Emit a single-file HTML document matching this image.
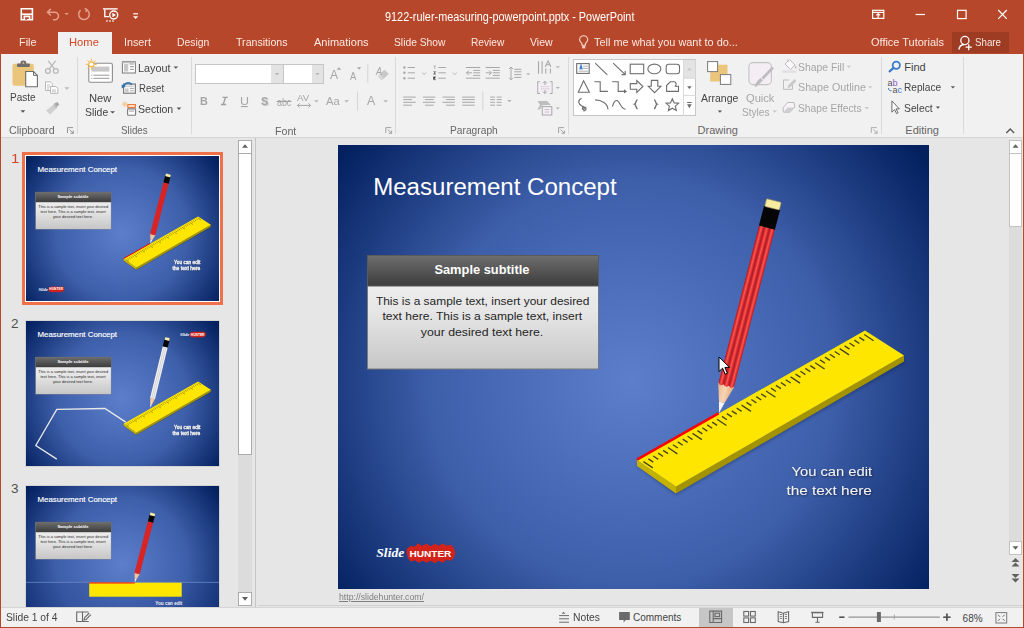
<!DOCTYPE html>
<html><head><meta charset="utf-8">
<style>
*{margin:0;padding:0;box-sizing:border-box}
html,body{width:1024px;height:628px;overflow:hidden;background:#E6E6E6;font-family:"Liberation Sans",sans-serif}
.a{position:absolute;white-space:nowrap}
svg{position:absolute;overflow:hidden}
#title{position:absolute;left:0;top:0;width:1024px;height:54px;background:#B7472A}
#ribbon{position:absolute;left:1px;top:54px;width:1022px;height:83px;background:#F1F1F1}
#rbline{position:absolute;left:1px;top:137px;width:1022px;height:1px;background:#D5D5D5}
#thumbs{position:absolute;left:1px;top:138px;width:254px;height:469px;background:#E6E6E6;overflow:hidden}
#editor{position:absolute;left:256px;top:138px;width:767px;height:467px;background:#E6E6E6;overflow:hidden}
#status{position:absolute;left:1px;top:607px;width:1022px;height:20px;background:#F1F1F1;border-top:1px solid #D5D5D5}
#bl{position:absolute;left:0;top:54px;width:1px;height:574px;background:#B7472A}
#br{position:absolute;left:1023px;top:54px;width:1px;height:574px;background:#B7472A}
#bb{position:absolute;left:0;top:627px;width:1024px;height:1px;background:#B7472A}
.sep{position:absolute;top:57px;width:1px;height:77px;background:#DADADA}
</style></head><body>
<div id="title"></div>
<div id="ribbon"></div>
<div id="rbline"></div>
<div id="thumbs"></div>
<div id="editor"></div>
<div id="status"></div>
<div id="bl"></div><div id="br"></div><div id="bb"></div>

<!-- tabs -->
<div class="a" style="left:58px;top:32px;width:54px;height:22px;background:#F1F1F1"></div>
<div class="a" style="left:952px;top:32px;width:57px;height:21px;background:#9E3B23"></div>

<div class="sep" style="left:77px"></div>
<div class="sep" style="left:191px"></div>
<div class="sep" style="left:395px"></div>
<div class="sep" style="left:568px"></div>
<div class="sep" style="left:881px"></div>
<div class="sep" style="left:963px"></div>


<!-- ===== TITLE BAR ICONS ===== -->
<svg width="1024" height="54" style="left:0;top:0">
  <g fill="none" stroke="#FFFFFF" stroke-width="1.6">
    <path d="M21.3,8.8 H32.4 V19.8 H21.3 Z"/>
    <path d="M21.3,14.2 H32.4"/>
    <path d="M24.3,19.8 V16.4 H29.6 V19.8"/>
  </g>
  <rect x="25.3" y="17.9" width="1.6" height="1.9" fill="#B7472A"/>
  <g fill="none" stroke="#E4A08C" stroke-width="1.5">
    <path d="M47.5,12.2 H54.5 A4,3.8 0 0 1 54.5,19.8 H53"/>
    <path d="M50.8,8.9 L47.5,12.2 L50.8,15.5"/>
    <path d="M80.6,10.2 A5.3,5.3 0 1 0 86.5,9.6"/>
    <path d="M84.6,8.4 L86.9,9.5 L85.7,12"/>
  </g>
  <polygon points="64.4,12.9 68.8,12.9 66.6,15.1" fill="#E4A08C"/>
  <g fill="none" stroke="#FFFFFF" stroke-width="1.4">
    <path d="M103,8.9 H117.6"/>
    <path d="M104.8,9.5 V16.6 H109"/>
    <circle cx="113.7" cy="15" r="4"/>
    <path d="M106,21 H115" stroke-dasharray="2,1" stroke-width="1"/>
  </g>
  <polygon points="112.4,12.7 112.4,17.3 116,15" fill="#FFFFFF"/>
  <rect x="133.2" y="13.2" width="4.8" height="1.2" fill="#FFFFFF"/>
  <polygon points="133,16.2 138.2,16.2 135.6,19" fill="#FFFFFF"/>
  <!-- window controls -->
  <g fill="none" stroke="#FFFFFF" stroke-width="1.2">
    <rect x="872.6" y="10.3" width="11.2" height="8.1"/>
    <path d="M872.6,12.4 H883.8"/>
    <path d="M878.2,18.4 V13.6 M876.4,15.4 L878.2,13.6 L880,15.4"/>
    <path d="M915.6,14.5 H925"/>
    <rect x="957.5" y="10.3" width="8.6" height="8.3"/>
    <path d="M998.2,10 L1006.8,18.8 M1006.8,10 L998.2,18.8"/>
  </g>
  <!-- lightbulb -->
  <g fill="none" stroke="#F6D9CF" stroke-width="1.1">
    <path d="M581.9,45.2 V43.8 C581.9,42.6 579.6,41.9 579.6,39.8 A4.05,4.05 0 1 1 587.7,39.8 C587.7,41.9 585.4,42.6 585.4,43.8 V45.2 Z"/>
  </g>
  <rect x="582.1" y="45.6" width="3.2" height="2.8" fill="#F0C7B9"/>
  <!-- share person -->
  <g fill="none" stroke="#FFFFFF" stroke-width="1.3">
    <circle cx="964.9" cy="40.5" r="4.1"/>
    <path d="M958.9,49.6 C959.3,46.5 961.4,44.7 964,44.5"/>
    <path d="M965.6,47.2 H971.8 M968.7,44.2 V50.2"/>
  </g>
</svg>


<!-- ===== RIBBON: CLIPBOARD + SLIDES ===== -->
<svg width="200" height="83" viewBox="0 54 200 83" style="left:0;top:54px">
  <!-- paste -->
  <rect x="12.5" y="63.8" width="21.3" height="22" rx="2" fill="#EBC57A"/>
  <rect x="17" y="63.5" width="12.8" height="3.4" rx="0.8" fill="#6D6D6D"/>
  <path d="M20.6,64 V62.6 A2.8,2 0 0 1 26.2,62.6 V64 Z" fill="#6D6D6D"/>
  <circle cx="23.4" cy="62.9" r="0.9" fill="#EBC57A"/>
  <path d="M25.7,71.5 H33.5 L37.4,75.4 V86.8 H25.7 Z" fill="#FFFFFF" stroke="#6D6D6D" stroke-width="1.1"/>
  <path d="M33.5,71.5 V75.4 H37.4" fill="none" stroke="#6D6D6D" stroke-width="1"/>
  <polygon points="20.5,110.3 25.3,110.3 22.9,112.7" fill="#555"/>
  <!-- cut -->
  <g fill="none" stroke="#B8B8B8" stroke-width="1.3">
    <circle cx="47.9" cy="71" r="2.4"/><circle cx="55.8" cy="71" r="2.4"/>
    <path d="M49.2,68.9 L55.6,60.8 M54.5,68.9 L48.1,60.8"/>
  </g>
  <!-- copy -->
  <g fill="#FFFFFF" stroke="#B8B8B8" stroke-width="1">
    <path d="M45.5,81.9 H50.5 L52.3,83.7 V90.5 H45.5 Z"/>
    <path d="M50.5,86.5 H55.8 L57.8,88.5 V93.4 H50.5 Z"/>
  </g>
  <g stroke="#B8B8B8" stroke-width="0.9">
    <path d="M47,85 H50 M47,87 H50 M47,89 H49"/>
    <path d="M52,90 H56 M52,91.8 H56"/>
  </g>
  <polygon points="64.5,87.3 69.2,87.3 66.85,89.7" fill="#B8B8B8"/>
  <!-- format painter -->
  <path d="M54,103.5 L57.5,102 L59.3,104.5 L56.5,107.3 Z" fill="#A8A8A8"/>
  <path d="M46,110.5 L52.8,105.2 L56,108.8 L50.3,114.5 Z" fill="#D0D0D0"/>
  <path d="M52.8,105.2 L54.6,103.8 L57.5,107.2 L56,108.8 Z" fill="#BDBDBD"/>
  <!-- dialog launcher clipboard -->
  <g fill="none" stroke="#8A8A8A" stroke-width="0.9">
    <path d="M67.5,133 V127.6 H73" /><path d="M69.5,129.6 L73.3,133.3 M73.3,130.5 V133.3 H70.5"/>
  </g>
  <!-- new slide -->
  <rect x="88.8" y="63.3" width="23.6" height="19" rx="1.6" fill="#FFFFFF" stroke="#8C8C8C" stroke-width="1.1"/>
  <rect x="91.6" y="66.6" width="17.8" height="5" fill="#C8C8C8"/>
  <g stroke="#8C8C8C" stroke-width="0.9"><path d="M93.5,75.2 H109.4 M93.5,78.3 H109.4"/></g>
  <g stroke="#8C8C8C" stroke-width="1"><path d="M91.3,75.2 H92.3 M91.3,78.3 H92.3"/></g>
  <g stroke="#F2B94B" stroke-width="1">
    <path d="M91.4,58.8 V69.8 M85.9,64.3 H96.9 M87.5,60.4 L95.3,68.2 M95.3,60.4 L87.5,68.2"/>
  </g>
  <circle cx="91.4" cy="64.3" r="3" fill="#F2B94B"/><circle cx="91.4" cy="64.3" r="1.9" fill="#FFFFFF"/>
  <polygon points="110.2,111.2 115,111.2 112.6,113.6" fill="#555"/>
  <!-- layout -->
  <rect x="122.4" y="61.7" width="13" height="11.3" fill="#FFFFFF" stroke="#7A7A7A" stroke-width="1"/>
  <rect x="124" y="64" width="4.3" height="7.5" fill="#C8C8C8"/>
  <path d="M129.5,64 H133.8 M130,66.7 H133.8 M130,69.3 H133.8" stroke="#8C8C8C" stroke-width="1"/>
  <rect x="122.4" y="61.7" width="13" height="1.6" fill="#BEBEBE"/>
  <polygon points="173.5,66.4 178.2,66.4 175.85,68.8" fill="#555"/>
  <!-- reset -->
  <rect x="123.6" y="84" width="11.8" height="9.2" fill="#FFFFFF" stroke="#7A7A7A" stroke-width="1.2"/>
  <rect x="125" y="85.3" width="9" height="2" fill="#D8D8D8"/>
  <rect x="125.2" y="88.4" width="3.4" height="3.6" fill="#C8C8C8"/>
  <path d="M129.8,88.5 H134 M129.8,90.8 H134" stroke="#A0A0A0" stroke-width="0.9"/>
  <path d="M123.6,87 C124.3,83 129,81 131.8,84.8" fill="none" stroke="#2E75B6" stroke-width="1.7"/>
  <polygon points="121.8,88.6 121.6,84.4 125.6,86.6" fill="#2E75B6"/>
  <!-- section -->
  <rect x="127.8" y="104.6" width="7.6" height="2.8" fill="#FFF4EC" stroke="#EE7D3A" stroke-width="1.2"/>
  <rect x="127.6" y="108.9" width="8" height="6.3" rx="0.8" fill="#FFFFFF" stroke="#7A7A7A" stroke-width="1.1"/>
  <rect x="129" y="110.2" width="5.2" height="1.8" fill="#C8C8C8"/>
  <g stroke="#F5C48A" stroke-width="0.9"><path d="M124.7,101.2 V107 M121.8,104.1 H127.6 M122.7,102.1 L126.7,106.1 M126.7,102.1 L122.7,106.1"/></g>
  <polygon points="176.6,107.6 181.3,107.6 178.95,110" fill="#555"/>
</svg>


<!-- ===== RIBBON: FONT + PARAGRAPH ===== -->
<svg width="380" height="83" viewBox="190 54 380 83" style="left:190px;top:54px">
  <!-- font boxes -->
  <rect x="195.5" y="64.5" width="88" height="19" fill="#FFFFFF" stroke="#C6C6C6" stroke-width="1"/>
  <rect x="271" y="65" width="12" height="18" fill="#E3E3E3"/>
  <rect x="283.5" y="64.5" width="40" height="19" fill="#FFFFFF" stroke="#C6C6C6" stroke-width="1"/>
  <rect x="312" y="65" width="11" height="18" fill="#E3E3E3"/>
  <polygon points="274.8,73 279.2,73 277,75.2" fill="#B5B5B5"/>
  <polygon points="315.3,73 319.7,73 317.5,75.2" fill="#B5B5B5"/>
  <polygon points="336.7,69.7 341.2,69.7 338.95,67.2" fill="#A6A6A6"/>
  <polygon points="357,67.2 361.2,67.2 359.1,69.7" fill="#A6A6A6"/>
  <rect x="367.3" y="64.2" width="1" height="18.7" fill="#D5D5D5"/>
  <path d="M378.5,75.5 L384.5,69.8 L388.8,73.9 L382.8,79.6 Z" fill="#C8C8C8"/>
  <path d="M377.6,76.4 L380,74 L384,78.3 L381.6,80.6 Z" fill="#D8D8D8"/>
  <!-- italic I -->
  <path d="M222.6,97.3 H227.8 M220.9,104.5 H226.1 M225.5,97.3 L223.2,104.5" fill="none" stroke="#A0A0A0" stroke-width="1.3"/>
  <rect x="240.9" y="106" width="6.9" height="1.1" fill="#A6A6A6"/>
  <rect x="276.5" y="101" width="15" height="1" fill="#A0A0A0"/>
  <!-- AV arrow -->
  <path d="M297.5,105.4 H310.5 M299.5,103.4 L297.5,105.4 L299.5,107.4 M308.5,103.4 L310.5,105.4 L308.5,107.4" fill="none" stroke="#A6A6A6" stroke-width="1"/>
  <polygon points="314.1,100.3 318.7,100.3 316.4,102.6" fill="#B5B5B5"/>
  <polygon points="344.2,100.3 349,100.3 346.6,102.6" fill="#B5B5B5"/>
  <rect x="357" y="91.6" width="1" height="19" fill="#D5D5D5"/>
  <polygon points="383.3,100.3 388,100.3 385.65,102.6" fill="#B5B5B5"/>
  <g fill="none" stroke="#9A9A9A" stroke-width="0.9">
    <path d="M385.8,133 V127.6 H391.3"/><path d="M387.8,129.6 L391.6,133.3 M391.6,130.5 V133.3 H388.8"/>
  </g>
  <!-- paragraph row 1 -->
  <g fill="#A8A8A8">
    <circle cx="404.4" cy="67.5" r="1.2"/><circle cx="404.4" cy="72.8" r="1.2"/><circle cx="404.4" cy="78.2" r="1.2"/>
  </g>
  <g stroke="#A8A8A8" stroke-width="1">
    <path d="M407.7,67.5 H415 M407.7,72.8 H415 M407.7,78.2 H415"/>
    <path d="M438.3,67.5 H445.8 M438.3,72.8 H445.8 M438.3,78.2 H445.8"/>
    <path d="M433.6,66 H436 M434.8,66 V69 M433.4,71.5 H436 L433.4,74.3 H436 M433.4,76.7 H436 L434.6,78.2 L436,79.8 H433.4" stroke-width="0.8"/>
    <path d="M465.9,67.5 H480.2 M473.2,70.4 H480.2 M473.2,72.8 H480.2 M473.2,75.4 H480.2 M465.9,78.2 H480.2"/>
    <path d="M485.5,67.5 H499.8 M492.8,70.4 H499.8 M492.8,72.8 H499.8 M492.8,75.4 H499.8 M485.5,78.2 H499.8"/>
    <path d="M466.5,72.8 H472 M468.8,70.5 L466.5,72.8 L468.8,75.1" fill="none"/>
    <path d="M485.8,72.8 H491.3 M489,70.5 L491.3,72.8 L489,75.1" fill="none"/>
  </g>
  <path d="M422.2,72.5 L424.15,74.6 L426.1,72.5" fill="none" stroke="#B0B0B0" stroke-width="0.9"/>
  <path d="M452.6,72.5 L454.75,74.6 L456.9,72.5" fill="none" stroke="#B0B0B0" stroke-width="0.9"/>
  <!-- line spacing -->
  <g stroke="#A8A8A8" stroke-width="1" fill="none">
    <path d="M511,67 V79.8 M509,69 L511,67 L513,69 M509,77.8 L511,79.8 L513,77.8"/>
    <path d="M514.3,69.3 H521.4 M514.3,71.8 H521.4 M514.3,74.6 H521.4 M514.3,77.4 H521.4"/>
  </g>
  <polygon points="526,73.3 530.4,73.3 528.2,75.3" fill="#B5B5B5"/>
  <!-- text direction -->
  <g stroke="#A8A8A8" stroke-width="1.1" fill="none">
    <path d="M538.5,61.2 V73.8 M542.1,61.2 V73.8 M545.8,68.5 V73.5 M550.4,68.5 V73.5"/>
    <path d="M545.3,66.8 L548.1,61 L550.9,66.8 M546.4,64.8 H549.8"/>
  </g>
  <polygon points="555.6,66.2 560,66.2 557.8,68.3" fill="#B5B5B5"/>
  <!-- align text -->
  <path d="M540,81.8 H537.8 V93.4 H540 M549.8,81.8 H552 V93.4 H549.8" fill="none" stroke="#A8A8A8" stroke-width="1.1"/>
  <rect x="538.5" y="82.5" width="13" height="10.5" fill="#F4EEF4"/>
  <path d="M544.9,81.5 V85 M543,83.2 L544.9,81.3 L546.8,83.2 M544.9,90 V93.6 M543,91.6 L544.9,93.6 L546.8,91.6" fill="none" stroke="#A8A8A8" stroke-width="1"/>
  <path d="M541,86.6 H549 M541,88.8 H549" stroke="#B8B8B8" stroke-width="0.8" stroke-dasharray="1,0.8"/>
  <polygon points="555.6,87.1 560,87.1 557.8,89.1" fill="#B5B5B5"/>
  <!-- smartart -->
  <path d="M537.5,101 H547 L551,105 H542.5 L540,109.5 H537.5 L540,105 Z" fill="#BDBDBD"/>
  <rect x="542.3" y="106.6" width="9.5" height="8.4" fill="#F6F0F6" stroke="#A8A8A8" stroke-width="1"/>
  <path d="M544.5,109.5 H549.5 M544.5,112 H549.5" stroke="#B8B8B8" stroke-width="0.8"/>
  <polygon points="555.6,107.5 560,107.5 557.8,109.5" fill="#B5B5B5"/>
  <!-- paragraph row 2 -->
  <g stroke="#A8A8A8" stroke-width="1">
    <path d="M403.2,97.1 H415.7 M403.2,99.6 H412 M403.2,102.3 H415.7 M403.2,105.2 H412"/>
    <path d="M422.9,97.1 H435.4 M424.9,99.6 H433.7 M422.9,102.3 H435.4 M424.9,105.2 H433.7"/>
    <path d="M442.6,97.1 H454.9 M446.1,99.6 H454.9 M442.6,102.3 H454.9 M446.1,105.2 H454.9"/>
    <path d="M462.2,97.1 H474.8 M462.2,99.6 H474.8 M462.2,102.3 H474.8 M462.2,105.2 H474.8"/>
    <path d="M490.2,97.1 H495 M490.2,99.6 H495 M490.2,102.3 H495 M490.2,105.2 H495 M496.6,97.1 H501.6 M496.6,99.6 H501.6 M496.6,102.3 H501.6 M496.6,105.2 H501.6"/>
  </g>
  <rect x="482.3" y="91.4" width="1" height="19" fill="#D5D5D5"/>
  <polygon points="507.1,99.9 511.7,99.9 509.4,102.2" fill="#B5B5B5"/>
  <g fill="none" stroke="#9A9A9A" stroke-width="0.9">
    <path d="M558.6,133 V127.6 H564.1"/><path d="M560.6,129.6 L564.4,133.3 M564.4,130.5 V133.3 H561.6"/>
  </g>
</svg>


<!-- ===== RIBBON: DRAWING + EDITING ===== -->
<svg width="460" height="83" viewBox="570 54 460 83" style="left:570px;top:54px">
  <!-- gallery -->
  <rect x="573.5" y="59.5" width="122" height="56" fill="#FFFFFF" stroke="#C6C6C6" stroke-width="1"/>
  <rect x="683.5" y="60" width="12" height="18.3" fill="#E3E3E3"/>
  <path d="M683.5,59.5 V115.5 M683.5,78.3 H695.5 M683.5,95.4 H695.5" stroke="#DADADA" stroke-width="1"/>
  <polygon points="687.3,70.3 691.3,70.3 689.3,68" fill="#C2C2C2"/>
  <polygon points="687.1,86.3 691.7,86.3 689.4,88.9" fill="#6A6A6A"/>
  <rect x="687.1" y="102" width="4.6" height="1" fill="#6A6A6A"/>
  <polygon points="687.1,104.2 691.7,104.2 689.4,108.3" fill="#6A6A6A"/>
  <g fill="none" stroke="#6E6E6E" stroke-width="1.1">
    <rect x="576.7" y="63.6" width="12.5" height="9.8"/>
    <path d="M583,66.2 H588 M583,68.4 H588 M578.5,71.2 H588" stroke="#A0A0A0" stroke-width="0.8"/>
    <path d="M595.2,63.1 L607.3,74.8"/>
    <path d="M613.2,63.1 L625.2,74.6 M621.5,74.6 H625.2 V70.9"/>
    <rect x="630.2" y="64.2" width="13.5" height="9.5"/>
    <ellipse cx="654.35" cy="68.95" rx="6.5" ry="4.8"/>
    <rect x="666.2" y="64.2" width="13.3" height="9.5" rx="2.5"/>
    <path d="M583.6,80.8 L578.3,92.3 H589.4 Z"/>
    <path d="M594.4,81.8 H600.2 V91.4 H607.9"/>
    <path d="M612.2,81.8 H618.2 V91.4 H624.5"/>
    <path d="M630.3,83.6 H636.8 V80.6 L642.9,86.5 L636.8,92.5 V89.3 H630.3 Z"/>
    <path d="M651.3,80.4 H657.8 V86.3 H660.9 L654.6,92.6 L648.3,86.3 H651.3 Z"/>
    <path d="M666.6,85.5 L670.3,81.8 H674.3 A2.4,2.4 0 0 1 674.8,86.3 H678.5 V91.4 H666.6 Z"/>
    <path d="M581.5,98.3 C577.5,100.5 578,104 582,106 C586,108 583.5,110.8 582.6,109 C581.5,106.8 586,106.3 586,108.6 C586,110.3 584.5,110.9 583.3,111" stroke-width="1.2"/>
    <path d="M595.2,99.9 C601.5,99.9 607.9,103.5 607.9,109.3"/>
    <path d="M612.4,106.5 C614,101 616,99.8 617.5,100.8 C620.5,103 621,109 625.6,109.2"/>
    <path d="M637.6,99.6 C635.8,99.6 636.2,103.6 634.6,104.2 C636.2,104.8 635.8,108.8 637.6,108.8" stroke-width="1.4"/>
    <path d="M654,99.6 C655.8,99.6 655.4,103.6 657,104.2 C655.4,104.8 655.8,108.8 654,108.8" stroke-width="1.4"/>
    <path d="M672.3,98.8 L674.2,102.9 L678.6,103.3 L675.3,106.2 L676.3,110.5 L672.3,108.2 L668.4,110.5 L669.4,106.2 L666.1,103.3 L670.5,102.9 Z"/>
  </g>
  <polygon points="624,89.3 627,91.4 624,93.5" fill="#6E6E6E"/>
  <path d="M579.8,69.5 L581,65.3 L582.2,69.5 M580.3,68 H581.7" fill="none" stroke="#3E7EC8" stroke-width="1.3"/>
  <!-- arrange -->
  <rect x="710.2" y="64.7" width="17.3" height="16.8" fill="#EBC57A"/>
  <rect x="707.6" y="61.6" width="10" height="10" fill="#FFFFFF" stroke="#7A7A7A" stroke-width="1"/>
  <rect x="720.4" y="74.6" width="10.4" height="9.8" fill="#FFFFFF" stroke="#7A7A7A" stroke-width="1"/>
  <polygon points="717.8,110.4 722,110.4 719.9,112.7" fill="#555"/>
  <!-- quick styles -->
  <rect x="748.9" y="62.6" width="22.5" height="22" rx="4" fill="#F4EEF4" stroke="#C4C4C4" stroke-width="1.1"/>
  <path d="M774,68.5 L763.5,79.5 L761.5,77.5 L772,66.5 Z" fill="#BDBDBD"/>
  <path d="M763,80 C761,82.5 758,86 754.5,87.3 C755.2,84 757,80.5 760.5,78 Z" fill="#BDBDBD"/>
  <polygon points="772.4,110.4 777,110.4 774.7,112.7" fill="#C8C8C8"/>
  <!-- shape fill/outline/effects -->
  <path d="M786.5,62.5 L789.6,59.6 L795,65 L790.5,69.5 L785,64 Z" fill="#FBF7FB" stroke="#BDBDBD" stroke-width="1"/>
  <path d="M788,62 V59.5" stroke="#BDBDBD" stroke-width="1"/>
  <path d="M795.5,65.5 C797,67 796.8,68.5 795.8,68.5 C794.8,68.5 794.6,67 795.5,65.5 Z" fill="#BDBDBD"/>
  <rect x="782.3" y="70.4" width="14" height="2.4" fill="#E2DEE2"/>
  <path d="M789,80 H783.5 V89.3 H792.5 V85" fill="none" stroke="#BDBDBD" stroke-width="1"/>
  <path d="M787.5,88.5 L788.5,85 L794.5,79 L796.5,81 L790.5,87 Z" fill="#C8C8C8"/>
  <path d="M783,108 L787.5,102.5 H794 L794.8,107 L790,112.2 H783.5 Z" fill="#F6F2F6" stroke="#BDBDBD" stroke-width="1"/>
  <path d="M787.5,107.5 H794.8 L790,112.2 H783.5 Z" fill="#CFCFCF"/>
  <polygon points="846.7,65.8 851,65.8 848.85,68" fill="#C8C8C8"/>
  <polygon points="868,86.3 872.3,86.3 870.15,88.5" fill="#C8C8C8"/>
  <polygon points="864.6,107 869,107 866.8,109.2" fill="#C8C8C8"/>
  <g fill="none" stroke="#A6A6A6" stroke-width="0.9">
    <path d="M871.3,133 V127.6 H876.8"/><path d="M873.3,129.6 L877.1,133.3 M877.1,130.5 V133.3 H874.3"/>
  </g>
  <!-- find -->
  <circle cx="896.3" cy="65.2" r="3.6" fill="none" stroke="#3B7BC8" stroke-width="1.8"/>
  <path d="M893.6,67.9 L889.6,71.3" stroke="#3B7BC8" stroke-width="2.2" stroke-linecap="round"/>
  <!-- replace -->
  <text x="887.6" y="86.3" font-family="Liberation Sans" font-size="9" fill="#555">a</text>
  <text x="892.6" y="86.3" font-family="Liberation Sans" font-size="9.2" fill="#8E5BBE">b</text>
  <text x="892.4" y="92.7" font-family="Liberation Sans" font-size="9" fill="#555">a</text>
  <text x="897.4" y="92.7" font-family="Liberation Sans" font-size="9" fill="#3B7BC8">c</text>
  <path d="M888.6,88 C888.4,90 889.5,90.8 891.5,90.8" fill="none" stroke="#3B7BC8" stroke-width="1"/>
  <polygon points="950.7,86.3 955,86.3 952.85,88.5" fill="#555"/>
  <!-- select -->
  <path d="M891.9,100.9 V112.2 L894.5,109.6 L896.6,113.6 L898.1,112.8 L896,108.9 H899.3 Z" fill="#FFFFFF" stroke="#6A6A6A" stroke-width="1"/>
  <polygon points="935.8,106.6 940,106.6 937.9,108.8" fill="#555"/>
  <!-- collapse -->
  <path d="M1006.3,133 L1010.2,129 L1014.1,133" fill="none" stroke="#555" stroke-width="1.3"/>
</svg>

<!-- ===== SLIDE DEFS ===== -->
<svg width="0" height="0" style="left:0;top:0">
<defs>
  <radialGradient id="gbg" gradientUnits="userSpaceOnUse" cx="293" cy="236" r="368">
    <stop offset="0" stop-color="#5D7FCB"/>
    <stop offset="0.55" stop-color="#3D5EA9"/>
    <stop offset="1" stop-color="#03205F"/>
  </radialGradient>
  <linearGradient id="ghead" x1="0" y1="0" x2="0" y2="1">
    <stop offset="0" stop-color="#6E6E6E"/>
    <stop offset="1" stop-color="#3C3C3C"/>
  </linearGradient>
  <linearGradient id="gbody" x1="0" y1="0" x2="0" y2="1">
    <stop offset="0" stop-color="#F4F4F4"/>
    <stop offset="0.5" stop-color="#E6E6E6"/>
    <stop offset="1" stop-color="#C6C6C6"/>
  </linearGradient>
  <linearGradient id="gridge" x1="0" y1="0" x2="1" y2="0">
    <stop offset="0" stop-color="#B01218"/>
    <stop offset="0.25" stop-color="#E02A2A"/>
    <stop offset="0.5" stop-color="#F25A56"/>
    <stop offset="0.75" stop-color="#E42E2E"/>
    <stop offset="1" stop-color="#B81418"/>
  </linearGradient>
  <linearGradient id="gwood" x1="0" y1="0" x2="1" y2="0">
    <stop offset="0" stop-color="#E8B58A"/>
    <stop offset="0.5" stop-color="#F8D5B5"/>
    <stop offset="1" stop-color="#E2A878"/>
  </linearGradient>
  <filter id="blur2" x="-10%" y="-10%" width="120%" height="120%"><feGaussianBlur stdDeviation="1.6"/></filter>
  <filter id="tshadow" x="-10%" y="-20%" width="120%" height="160%"><feDropShadow dx="0.8" dy="1" stdDeviation="0.8" flood-color="#000" flood-opacity="0.55"/></filter>
  <g id="sbg"><rect x="0" y="0" width="591" height="444" fill="url(#gbg)"/></g>
  <g id="stitle"><text x="35.2" y="49.5" textLength="243.5" lengthAdjust="spacingAndGlyphs" font-family="Liberation Sans" font-size="23.3" fill="#FFFFFF">Measurement Concept</text></g>
  <g id="sbox">
    <rect x="29.5" y="110.5" width="231" height="113.5" fill="url(#gbody)" stroke="#7A7A7A" stroke-width="1"/>
    <rect x="29.5" y="110.5" width="231" height="30.5" fill="url(#ghead)" stroke="#5A5A5A" stroke-width="1"/>
    <text x="96.4" y="129.4" textLength="95" lengthAdjust="spacingAndGlyphs" font-family="Liberation Sans" font-weight="700" font-size="12.8" fill="#FFFFFF">Sample subtitle</text>
    <g font-family="Liberation Sans" font-size="11.7" fill="#262626">
    <text x="37.9" y="159.9" textLength="213.5" lengthAdjust="spacingAndGlyphs">This is a sample text, insert your desired</text>
    <text x="44.5" y="175.3" textLength="199.5" lengthAdjust="spacingAndGlyphs">text here. This is a sample text, insert</text>
    <text x="82.8" y="190.9" textLength="122.5" lengthAdjust="spacingAndGlyphs">your desired text here.</text>
    </g>
  </g>
  <g id="stext" font-family="Liberation Sans" font-size="13.7" fill="#F2F2F2" filter="url(#tshadow)">
    <text x="453.5" y="330.9" textLength="80.5" lengthAdjust="spacingAndGlyphs">You can edit</text>
    <text x="448.4" y="349.8" textLength="85.5" lengthAdjust="spacingAndGlyphs">the text here</text>
  </g>
  <g id="slogo">
    <path d="M30,6 L34,3 L38,4 L41,0.5 L45,3 L50,1 L54,3.5 L58,1 L62,3 L66,0.8 L70,3 L74,2 L77,5 L78.6,10 L77,15 L74,18 L70,17 L66,20 L62,18 L58,20.5 L54,18 L50,20 L46,18 L42,20 L38,17.5 L34,19 L31,15 L29.8,10 Z" fill="#D2231A"/>
    <text x="-0.5" y="14.5" textLength="28" lengthAdjust="spacingAndGlyphs" font-family="Liberation Serif" font-style="italic" font-weight="700" font-size="13.5" fill="#FFFFFF">Slide</text>
    <text x="32.6" y="14" textLength="42" lengthAdjust="spacingAndGlyphs" font-family="Liberation Sans" font-weight="700" font-size="8.6" fill="#FFFFFF">HUNTER</text>
  </g>
  <g id="sruler">
    <polygon points="300,322 338,350 567,218 566,213 338,345 299,318" fill="#0A1A40" opacity="0.35" filter="url(#blur2)"/>
    <polygon points="299,315 338,341.5 338,348.5 299,321" fill="#C4B200"/>
    <polygon points="338,341.5 566,210.5 566,216.5 338,348.5" fill="#A39300"/>
    <polygon points="299,315 527,185.5 566,210.5 338,341.5" fill="#FFE600"/>
    <g id="ticks" stroke="#35352A" stroke-width="1.4" stroke-linecap="butt" opacity="0.9"><line x1="526.20" y1="189.50" x2="535.60" y2="195.76"/><line x1="521.29" y1="192.33" x2="526.28" y2="195.65"/><line x1="516.39" y1="195.15" x2="521.38" y2="198.48"/><line x1="511.48" y1="197.98" x2="516.47" y2="201.30"/><line x1="506.58" y1="200.80" x2="511.57" y2="204.13"/><line x1="501.67" y1="203.63" x2="511.07" y2="209.89"/><line x1="496.76" y1="206.46" x2="501.75" y2="209.78"/><line x1="491.86" y1="209.28" x2="496.85" y2="212.61"/><line x1="486.95" y1="212.11" x2="491.94" y2="215.43"/><line x1="482.05" y1="214.93" x2="487.04" y2="218.26"/><line x1="477.14" y1="217.76" x2="486.54" y2="224.02"/><line x1="472.23" y1="220.59" x2="477.22" y2="223.91"/><line x1="467.33" y1="223.41" x2="472.32" y2="226.74"/><line x1="462.42" y1="226.24" x2="467.41" y2="229.56"/><line x1="457.52" y1="229.06" x2="462.51" y2="232.39"/><line x1="452.61" y1="231.89" x2="462.01" y2="238.15"/><line x1="447.70" y1="234.72" x2="452.69" y2="238.04"/><line x1="442.80" y1="237.54" x2="447.79" y2="240.87"/><line x1="437.89" y1="240.37" x2="442.88" y2="243.69"/><line x1="432.99" y1="243.19" x2="437.98" y2="246.52"/><line x1="428.08" y1="246.02" x2="437.48" y2="252.28"/><line x1="423.17" y1="248.85" x2="428.16" y2="252.17"/><line x1="418.27" y1="251.67" x2="423.26" y2="255.00"/><line x1="413.36" y1="254.50" x2="418.35" y2="257.82"/><line x1="408.46" y1="257.32" x2="413.45" y2="260.65"/><line x1="403.55" y1="260.15" x2="412.95" y2="266.41"/><line x1="398.64" y1="262.98" x2="403.63" y2="266.30"/><line x1="393.74" y1="265.80" x2="398.73" y2="269.13"/><line x1="388.83" y1="268.63" x2="393.82" y2="271.95"/><line x1="383.93" y1="271.45" x2="388.92" y2="274.78"/><line x1="379.02" y1="274.28" x2="388.42" y2="280.54"/><line x1="374.11" y1="277.11" x2="379.10" y2="280.43"/><line x1="369.21" y1="279.93" x2="374.20" y2="283.26"/><line x1="364.30" y1="282.76" x2="369.29" y2="286.08"/><line x1="359.40" y1="285.58" x2="364.39" y2="288.91"/><line x1="354.49" y1="288.41" x2="363.89" y2="294.67"/><line x1="349.58" y1="291.24" x2="354.57" y2="294.56"/><line x1="344.68" y1="294.06" x2="349.67" y2="297.39"/><line x1="339.77" y1="296.89" x2="344.76" y2="300.21"/><line x1="334.87" y1="299.71" x2="339.86" y2="303.04"/><line x1="329.96" y1="302.54" x2="339.36" y2="308.80"/><line x1="325.05" y1="305.37" x2="330.04" y2="308.69"/><line x1="320.15" y1="308.19" x2="325.14" y2="311.52"/><line x1="315.24" y1="311.02" x2="320.23" y2="314.34"/><line x1="310.34" y1="313.84" x2="315.33" y2="317.17"/><line x1="305.43" y1="316.67" x2="314.83" y2="322.93"/></g>
  </g>
  <g id="pencilR">
    <polygon points="0,0 -2.9,-11 2.9,-11" fill="#F4F4F4"/>
    <polygon points="-2.9,-11 2.9,-11 8.25,-29 -8.25,-29" fill="url(#gwood)"/>
    <clipPath id="pclip"><path d="M-8.25,-192 L8.25,-192 L8.25,-30 Q5.5,-25 2.75,-29 Q0,-25 -2.75,-29 Q-5.5,-25 -8.25,-30 Z"/></clipPath>
    <g clip-path="url(#pclip)">
      <rect x="-8.25" y="-192" width="5.5" height="170" fill="url(#gridge)"/>
      <rect x="-2.75" y="-192" width="5.5" height="170" fill="url(#gridge)"/>
      <rect x="2.75" y="-192" width="5.5" height="170" fill="url(#gridge)"/>
    </g>
    <rect x="-8.25" y="-212" width="16.5" height="20.5" fill="#050505"/>
    <rect x="-7.6" y="-219.5" width="15.2" height="8" rx="1.2" fill="#F7EBA0" stroke="#8A8060" stroke-width="0.6"/>
  </g>
  <g id="pencilW">
    <polygon points="0,0 -2.8,-11 2.8,-11" fill="#F4F4F4"/>
    <polygon points="-2.8,-11 2.8,-11 7.75,-29 -7.75,-29" fill="url(#gwood)"/>
    <rect x="-7.75" y="-192" width="15.5" height="163" fill="#F2F2F2"/>
    <line x1="-2.6" y1="-192" x2="-2.6" y2="-29" stroke="#B0B0B0" stroke-width="1.3"/>
    <line x1="2.6" y1="-192" x2="2.6" y2="-29" stroke="#B0B0B0" stroke-width="1.3"/>
    <rect x="-7.75" y="-213" width="15.5" height="21" fill="#050505"/>
    <rect x="-7" y="-221.5" width="14" height="8.5" rx="1.2" fill="#F7EBA0"/>
  </g>
  <g id="pencilS">
    <polygon points="0,0 -2.9,-11 2.9,-11" fill="#F4F4F4"/>
    <polygon points="-2.9,-11 2.9,-11 8.25,-29 -8.25,-29" fill="#F0C49C"/>
    <path d="M-8.25,-192 L8.25,-192 L8.25,-30 Q5.5,-25 2.75,-29 Q0,-25 -2.75,-29 Q-5.5,-25 -8.25,-30 Z" fill="#D82424"/>
    <rect x="-8.25" y="-212" width="16.5" height="20.5" fill="#050505"/>
    <rect x="-7.6" y="-219.5" width="15.2" height="8" rx="1.2" fill="#F7EBA0"/>
  </g>
</defs>
</svg>

<!-- ===== MAIN SLIDE ===== -->
<svg width="591" height="444" viewBox="0 0 591 444" style="left:338px;top:145px">
  <use href="#sbg"/><use href="#stitle"/><use href="#sbox"/>
  <use href="#sruler"/>
  <line x1="299" y1="314.6" x2="380.5" y2="268.4" stroke="#FF0000" stroke-width="2.6"/>
  <use href="#pencilR" transform="translate(381,268) rotate(14.5)"/>
  <use href="#stext"/>
  <use href="#slogo" transform="translate(38.8,397.8)"/>
</svg>


<!-- ===== THUMBNAILS ===== -->
<div class="a" style="left:22px;top:152px;width:201px;height:153px;background:#F0704A"></div>
<div class="a" style="left:25px;top:155px;width:195px;height:147px;background:#FFFFFF"></div>
<svg width="193" height="145" viewBox="0 0 591 444" preserveAspectRatio="none" style="left:26px;top:156px">
  <use href="#sbg"/><use href="#stitle" stroke="#FFFFFF" stroke-width="0.5"/><use href="#sbox"/>
  <use href="#sruler"/>
  <line x1="299" y1="313.8" x2="380.5" y2="267.6" stroke="#FF0000" stroke-width="3"/>
  <use href="#pencilS" transform="translate(381,268) rotate(14.5)"/>
  <use href="#stext" stroke="#F2F2F2" stroke-width="0.8"/>
  <use href="#slogo" transform="translate(38.8,397.8)"/>
</svg>
<div class="a" style="left:25px;top:320px;width:195px;height:147px;background:#D4D4D4"></div>
<svg width="193" height="145" viewBox="0 0 591 444" preserveAspectRatio="none" style="left:26px;top:321px">
  <use href="#sbg"/><use href="#stitle" stroke="#FFFFFF" stroke-width="0.5"/><use href="#sbox"/>
  <polyline points="305.6,309.6 241.6,268 94.3,270.4 30,381.2 94.3,422.9" fill="none" stroke="#E8E8E8" stroke-width="4"/>
  <use href="#sruler"/>
  <use href="#pencilW" transform="translate(380.5,266) rotate(13.8)"/>
  <use href="#stext" stroke="#F2F2F2" stroke-width="0.8"/>
  <use href="#slogo" transform="translate(472,31)"/>
</svg>
<div class="a" style="left:25px;top:485px;width:195px;height:122px;background:#D4D4D4"></div>
<svg width="193" height="121" viewBox="0 0 591 370.5" preserveAspectRatio="none" style="left:26px;top:486px">
  <use href="#sbg"/>
  <rect x="0" y="295" width="591" height="149" fill="#1E3C86" opacity="0.25"/>
  <line x1="0" y1="295" x2="591" y2="295" stroke="#6A88C4" stroke-width="2.5"/>
  <use href="#stitle" stroke="#FFFFFF" stroke-width="0.5"/><use href="#sbox"/>
  <rect x="193.5" y="296" width="283.3" height="43" fill="#FFE600"/>
  <line x1="193.5" y1="297" x2="333" y2="297" stroke="#FF0000" stroke-width="3"/>
  <use href="#pencilS" transform="translate(333,295.5) rotate(14.6)"/>
  <text x="396" y="364" textLength="83" lengthAdjust="spacingAndGlyphs" font-family="Liberation Sans" font-weight="700" font-size="13.7" fill="#F2F2F2">You can edit</text>
</svg>
<!-- thumb scrollbar -->
<div class="a" style="left:238px;top:153px;width:14px;height:452px;background:#DCDCDC"></div>
<div class="a" style="left:238px;top:140px;width:14px;height:14px;background:#FFFFFF;border:1px solid #ABABAB"></div>
<div class="a" style="left:238px;top:153px;width:14px;height:302px;background:#FFFFFF;border:1px solid #ABABAB"></div>
<div class="a" style="left:238px;top:592px;width:14px;height:14px;background:#FFFFFF;border:1px solid #ABABAB"></div>
<svg width="14" height="14" style="left:238px;top:140px"><polygon points="4,7.7 10,7.7 7,4.2" fill="#606060"/></svg>
<svg width="14" height="14" style="left:238px;top:592px"><polygon points="4,5 10,5 7,8.7" fill="#606060"/></svg>
<div class="a" style="left:255px;top:138px;width:1px;height:469px;background:#C6C6C6"></div>
<!-- editor scrollbar -->
<div class="a" style="left:1009px;top:153px;width:13px;height:389px;background:#DCDCDC"></div>
<div class="a" style="left:1009px;top:140px;width:13px;height:14px;background:#FFFFFF;border:1px solid #C2C2C2"></div>
<div class="a" style="left:1009px;top:153px;width:13px;height:74px;background:#FFFFFF;border:1px solid #C2C2C2"></div>
<div class="a" style="left:1009px;top:541px;width:13px;height:14px;background:#FFFFFF;border:1px solid #C2C2C2"></div>
<svg width="13" height="14" style="left:1009px;top:140px"><polygon points="3.5,7.7 9.5,7.7 6.5,4.2" fill="#606060"/></svg>
<svg width="13" height="14" style="left:1009px;top:541px"><polygon points="3.5,5.2 9.5,5.2 6.5,8.7" fill="#606060"/></svg>
<svg width="13" height="30" style="left:1009px;top:555px">
  <polygon points="2.5,7 10.5,7 6.5,3" fill="#606060"/><polygon points="2.5,11.5 10.5,11.5 6.5,7.5" fill="#606060"/>
  <polygon points="2.5,19 10.5,19 6.5,23" fill="#606060"/><polygon points="2.5,23.5 10.5,23.5 6.5,27.5" fill="#606060"/>
</svg>
<div class="a" style="left:258px;top:605px;width:765px;height:1px;background:#D0D0D0"></div>

<!-- ===== STATUS BAR ICONS ===== -->
<svg width="1024" height="21" viewBox="0 607 1024 21" style="left:0;top:607px">
  <rect x="699" y="608" width="34" height="19" fill="#C6C6C6"/>
  <g fill="none" stroke="#6A6A6A" stroke-width="1.1">
    <path d="M76.7,612 H82.5 V621.5 H76.7 Z M82.5,612 V621.5"/>
    <path d="M89.2,613 L84.5,617.8 L84,620 L86.2,619.5 L90.8,614.7"/>
    <path d="M82.5,612 H88.5 M88.7,621.5 H82.5"/>
    <path d="M709.8,611.1 H721.6 V622.5 H709.8 Z M713.2,611.1 V622.5 M713.2,618.6 H721.6"/>
    <rect x="715" y="613.2" width="4.6" height="3.4"/>
    <rect x="743.8" y="611.5" width="4.8" height="4.6"/><rect x="750.5" y="611.5" width="4.8" height="4.6"/>
    <rect x="743.8" y="617.9" width="4.8" height="4.6"/><rect x="750.5" y="617.9" width="4.8" height="4.6"/>
    <path d="M778.2,611.8 L783.4,613.2 L788.6,611.8 V621.5 L783.4,622.8 L778.2,621.5 Z M783.4,613.2 V623"/>
    <path d="M779.8,614.5 H782 M779.8,616.5 H782 M779.8,618.5 H782 M784.8,614.5 H787 M784.8,616.5 H787 M784.8,618.5 H787" stroke-width="0.8"/>
    <path d="M812.4,612.5 V617.4 H822.6 V612.5 M817.5,617.4 V622 M815.3,622.3 H819.7"/>
  </g>
  <rect x="811.2" y="611.8" width="12.2" height="1.5" fill="#6A6A6A"/>
  <!-- notes -->
  <polygon points="561.7,613.8 565.4,613.8 563.55,611.8" fill="#6A6A6A"/>
  <path d="M559.1,615.6 H569 M559.1,618.8 H569 M559.1,622.2 H569" stroke="#6A6A6A" stroke-width="1"/>
  <!-- comments -->
  <path d="M619.1,612 H629.8 V620 H625.8 L623.6,622.4 V620 H619.1 Z" fill="#6A6A6A"/>
  <!-- zoom -->
  <path d="M839.3,617.2 H844.4 M848.6,617.2 H939.7 M943.3,617.2 H950.5 M946.9,613.8 V620.6" stroke="#6A6A6A" stroke-width="1"/>
  <path d="M848.6,617.2 H939.7" stroke="#B8B8B8" stroke-width="1"/>
  <path d="M943.3,617.2 H950.5 M946.9,613.6 V620.8 M839.3,617.2 H844.4" stroke="#555" stroke-width="1.6"/>
  <rect x="876.9" y="612" width="4" height="10" fill="#6A6A6A"/>
  <path d="M894.3,614.5 V619.5" stroke="#9A9A9A" stroke-width="0.8"/>
  <rect x="995.9" y="612.6" width="10.8" height="10.4" fill="none" stroke="#7A7A7A" stroke-width="1"/>
  <path d="M998,614.8 L1000,616.8 M1004.6,614.8 L1002.6,616.8 M998,620.8 L1000,618.8 M1004.6,620.8 L1002.6,618.8" stroke="#6A6A6A" stroke-width="1"/>
</svg>
<!-- mouse cursor -->
<svg width="16" height="22" viewBox="0 0 16 22" style="left:718px;top:356px">
  <path d="M1,1 V15.5 L4.6,12.2 L7.2,18.2 L9.4,17.2 L6.9,11.4 H11.6 Z" fill="#FFFFFF" stroke="#000000" stroke-width="1" stroke-linejoin="round"/>
</svg>

<!-- TEXTS -->
<div class='a' style='left:385.09px;top:11.30px;font-family:"Liberation Sans";font-size:12px;font-weight:400;font-style:normal;color:#FFFFFF;line-height:1;transform:scaleX(0.9055);transform-origin:0 0;'>9122-ruler-measuring-powerpoint.pptx - PowerPoint</div>
<div class='a' style='left:19.06px;top:36.20px;font-family:"Liberation Sans";font-size:11.6px;font-weight:400;font-style:normal;color:#FBE8E2;line-height:1;transform:scaleX(0.9412);transform-origin:0 0;'>File</div>
<div class='a' style='left:69.03px;top:36.20px;font-family:"Liberation Sans";font-size:11.6px;font-weight:400;font-style:normal;color:#D24726;line-height:1;transform:scaleX(0.9667);transform-origin:0 0;'>Home</div>
<div class='a' style='left:124.07px;top:36.20px;font-family:"Liberation Sans";font-size:11.6px;font-weight:400;font-style:normal;color:#FBE8E2;line-height:1;transform:scaleX(0.9286);transform-origin:0 0;'>Insert</div>
<div class='a' style='left:176.70px;top:36.20px;font-family:"Liberation Sans";font-size:11.6px;font-weight:400;font-style:normal;color:#FBE8E2;line-height:1;transform:scaleX(0.8971);transform-origin:0 0;'>Design</div>
<div class='a' style='left:236.20px;top:36.20px;font-family:"Liberation Sans";font-size:11.6px;font-weight:400;font-style:normal;color:#FBE8E2;line-height:1;transform:scaleX(0.9161);transform-origin:0 0;'>Transitions</div>
<div class='a' style='left:313.90px;top:36.20px;font-family:"Liberation Sans";font-size:11.6px;font-weight:400;font-style:normal;color:#FBE8E2;line-height:1;transform:scaleX(0.9509);transform-origin:0 0;'>Animations</div>
<div class='a' style='left:393.71px;top:36.20px;font-family:"Liberation Sans";font-size:11.6px;font-weight:400;font-style:normal;color:#FBE8E2;line-height:1;transform:scaleX(0.8877);transform-origin:0 0;'>Slide Show</div>
<div class='a' style='left:470.83px;top:36.20px;font-family:"Liberation Sans";font-size:11.6px;font-weight:400;font-style:normal;color:#FBE8E2;line-height:1;transform:scaleX(0.8730);transform-origin:0 0;'>Review</div>
<div class='a' style='left:530.00px;top:36.20px;font-family:"Liberation Sans";font-size:11.6px;font-weight:400;font-style:normal;color:#FBE8E2;line-height:1;transform:scaleX(0.9080);transform-origin:0 0;'>View</div>
<div class='a' style='left:594.40px;top:36.20px;font-family:"Liberation Sans";font-size:11.6px;font-weight:400;font-style:normal;color:#FBE8E2;line-height:1;transform:scaleX(0.9421);transform-origin:0 0;'>Tell me what you want to do...</div>
<div class='a' style='left:870.55px;top:36.20px;font-family:"Liberation Sans";font-size:11.6px;font-weight:400;font-style:normal;color:#FBE8E2;line-height:1;transform:scaleX(0.9461);transform-origin:0 0;'>Office Tutorials</div>
<div class='a' style='left:974.96px;top:36.20px;font-family:"Liberation Sans";font-size:11.6px;font-weight:400;font-style:normal;color:#FBE8E2;line-height:1;transform:scaleX(0.8400);transform-origin:0 0;'>Share</div>
<div class='a' style='left:10.29px;top:92.00px;font-family:"Liberation Sans";font-size:11px;font-weight:400;font-style:normal;color:#444444;line-height:1;transform:scaleX(0.9111);transform-origin:0 0;'>Paste</div>
<div class='a' style='left:88.58px;top:92.70px;font-family:"Liberation Sans";font-size:11px;font-weight:400;font-style:normal;color:#444444;line-height:1;transform:scaleX(1.0190);transform-origin:0 0;'>New</div>
<div class='a' style='left:84.75px;top:107.00px;font-family:"Liberation Sans";font-size:11px;font-weight:400;font-style:normal;color:#444444;line-height:1;transform:scaleX(0.9478);transform-origin:0 0;'>Slide</div>
<div class='a' style='left:138.41px;top:62.60px;font-family:"Liberation Sans";font-size:11px;font-weight:400;font-style:normal;color:#444444;line-height:1;transform:scaleX(0.9875);transform-origin:0 0;'>Layout</div>
<div class='a' style='left:138.53px;top:83.40px;font-family:"Liberation Sans";font-size:11px;font-weight:400;font-style:normal;color:#444444;line-height:1;transform:scaleX(0.8714);transform-origin:0 0;'>Reset</div>
<div class='a' style='left:138.44px;top:104.00px;font-family:"Liberation Sans";font-size:11px;font-weight:400;font-style:normal;color:#444444;line-height:1;transform:scaleX(0.9600);transform-origin:0 0;'>Section</div>
<div class='a' style='left:700.80px;top:92.70px;font-family:"Liberation Sans";font-size:11px;font-weight:400;font-style:normal;color:#444444;line-height:1;transform:scaleX(0.9538);transform-origin:0 0;'>Arrange</div>
<div class='a' style='left:745.59px;top:92.70px;font-family:"Liberation Sans";font-size:11px;font-weight:400;font-style:normal;color:#A6A6A6;line-height:1;transform:scaleX(1.0111);transform-origin:0 0;'>Quick</div>
<div class='a' style='left:742.08px;top:107.00px;font-family:"Liberation Sans";font-size:11px;font-weight:400;font-style:normal;color:#A6A6A6;line-height:1;transform:scaleX(0.9172);transform-origin:0 0;'>Styles</div>
<div class='a' style='left:798.46px;top:61.90px;font-family:"Liberation Sans";font-size:11px;font-weight:400;font-style:normal;color:#A6A6A6;line-height:1;transform:scaleX(0.9447);transform-origin:0 0;'>Shape Fill</div>
<div class='a' style='left:798.43px;top:82.00px;font-family:"Liberation Sans";font-size:11px;font-weight:400;font-style:normal;color:#A6A6A6;line-height:1;transform:scaleX(0.9735);transform-origin:0 0;'>Shape Outline</div>
<div class='a' style='left:798.47px;top:102.80px;font-family:"Liberation Sans";font-size:11px;font-weight:400;font-style:normal;color:#A6A6A6;line-height:1;transform:scaleX(0.9299);transform-origin:0 0;'>Shape Effects</div>
<div class='a' style='left:904.30px;top:61.80px;font-family:"Liberation Sans";font-size:11px;font-weight:400;font-style:normal;color:#444444;line-height:1;'>Find</div>
<div class='a' style='left:904.38px;top:82.20px;font-family:"Liberation Sans";font-size:11px;font-weight:400;font-style:normal;color:#444444;line-height:1;transform:scaleX(0.9205);transform-origin:0 0;'>Replace</div>
<div class='a' style='left:904.36px;top:102.80px;font-family:"Liberation Sans";font-size:11px;font-weight:400;font-style:normal;color:#444444;line-height:1;transform:scaleX(0.9379);transform-origin:0 0;'>Select</div>
<div class='a' style='left:8.78px;top:125.00px;font-family:"Liberation Sans";font-size:11px;font-weight:400;font-style:normal;color:#666666;line-height:1;transform:scaleX(0.9674);transform-origin:0 0;'>Clipboard</div>
<div class='a' style='left:120.61px;top:125.00px;font-family:"Liberation Sans";font-size:11px;font-weight:400;font-style:normal;color:#666666;line-height:1;transform:scaleX(0.8897);transform-origin:0 0;'>Slides</div>
<div class='a' style='left:274.73px;top:125.70px;font-family:"Liberation Sans";font-size:11px;font-weight:400;font-style:normal;color:#666666;line-height:1;transform:scaleX(0.9667);transform-origin:0 0;'>Font</div>
<div class='a' style='left:450.07px;top:125.00px;font-family:"Liberation Sans";font-size:11px;font-weight:400;font-style:normal;color:#666666;line-height:1;transform:scaleX(0.9300);transform-origin:0 0;'>Paragraph</div>
<div class='a' style='left:697.61px;top:125.00px;font-family:"Liberation Sans";font-size:11px;font-weight:400;font-style:normal;color:#666666;line-height:1;'>Drawing</div>
<div class='a' style='left:905.30px;top:125.40px;font-family:"Liberation Sans";font-size:11px;font-weight:400;font-style:normal;color:#666666;line-height:1;'>Editing</div>
<div class='a' style='left:6.37px;top:613.20px;font-family:"Liberation Sans";font-size:10px;font-weight:400;font-style:normal;color:#444444;line-height:1;transform:scaleX(1.0286);transform-origin:0 0;'>Slide 1 of 4</div>
<div class='a' style='left:572.77px;top:613.20px;font-family:"Liberation Sans";font-size:10px;font-weight:400;font-style:normal;color:#444444;line-height:1;transform:scaleX(1.0320);transform-origin:0 0;'>Notes</div>
<div class='a' style='left:633.00px;top:613.20px;font-family:"Liberation Sans";font-size:10px;font-weight:400;font-style:normal;color:#444444;line-height:1;'>Comments</div>
<div class='a' style='left:962.59px;top:613.50px;font-family:"Liberation Sans";font-size:10px;font-weight:400;font-style:normal;color:#444444;line-height:1;'>68%</div>
<div class='a' style='left:10.58px;top:152.00px;font-family:"Liberation Sans";font-size:13.5px;font-weight:400;font-style:normal;color:#D24726;line-height:1;transform:scaleX(1.1167);transform-origin:0 0;'>1</div>
<div class='a' style='left:11.00px;top:317.00px;font-family:"Liberation Sans";font-size:13.5px;font-weight:400;font-style:normal;color:#505050;line-height:1;'>2</div>
<div class='a' style='left:11.00px;top:482.00px;font-family:"Liberation Sans";font-size:13.5px;font-weight:400;font-style:normal;color:#505050;line-height:1;'>3</div>
<div class='a' style='left:338.54px;top:592.70px;font-family:"Liberation Sans";font-size:9px;font-weight:400;font-style:normal;color:#7F7F7F;line-height:1;transform:scaleX(0.9644);transform-origin:0 0;text-decoration:underline'>http://slidehunter.com/</div>
<div class='a' style='left:200.01px;top:96.00px;font-family:"Liberation Sans";font-size:11px;font-weight:700;font-style:normal;color:#A6A6A6;line-height:1;transform:scaleX(0.9857);transform-origin:0 0;'>B</div>
<div class='a' style='left:239.77px;top:96.00px;font-family:"Liberation Sans";font-size:11px;font-weight:400;font-style:normal;color:#A6A6A6;line-height:1;transform:scaleX(1.1333);transform-origin:0 0;'>U</div>
<div class='a' style='left:260.90px;top:96.00px;font-family:"Liberation Sans";font-size:11px;font-weight:700;font-style:normal;color:#A6A6A6;line-height:1;transform:scaleX(0.9857);transform-origin:0 0;text-shadow:1px 1px 1px #C8C8C8'>S</div>
<div class='a' style='left:277.00px;top:98.30px;font-family:"Liberation Sans";font-size:10px;font-weight:400;font-style:normal;color:#A6A6A6;line-height:1;transform:scaleX(0.8875);transform-origin:0 0;'>abc</div>
<div class='a' style='left:297.20px;top:94.20px;font-family:"Liberation Sans";font-size:9px;font-weight:400;font-style:normal;color:#A6A6A6;line-height:1;transform:scaleX(1.0727);transform-origin:0 0;'>AV</div>
<div class='a' style='left:326.40px;top:95.70px;font-family:"Liberation Sans";font-size:11px;font-weight:400;font-style:normal;color:#A6A6A6;line-height:1;transform:scaleX(1.0231);transform-origin:0 0;'>Aa</div>
<div class='a' style='left:366.90px;top:95.20px;font-family:"Liberation Sans";font-size:12px;font-weight:400;font-style:normal;color:#A6A6A6;line-height:1;transform:scaleX(1.0250);transform-origin:0 0;'>A</div>
<div class='a' style='left:329.90px;top:69.10px;font-family:"Liberation Sans";font-size:12px;font-weight:400;font-style:normal;color:#A6A6A6;line-height:1;transform:scaleX(1.0125);transform-origin:0 0;'>A</div>
<div class='a' style='left:350.40px;top:71.60px;font-family:"Liberation Sans";font-size:10px;font-weight:400;font-style:normal;color:#A6A6A6;line-height:1;transform:scaleX(0.9429);transform-origin:0 0;'>A</div>
<div class='a' style='left:376.00px;top:66.80px;font-family:"Liberation Sans";font-size:10px;font-weight:400;font-style:italic;color:#A6A6A6;line-height:1;transform:scaleX(0.9167);transform-origin:0 0;'>A</div>

</body></html>
